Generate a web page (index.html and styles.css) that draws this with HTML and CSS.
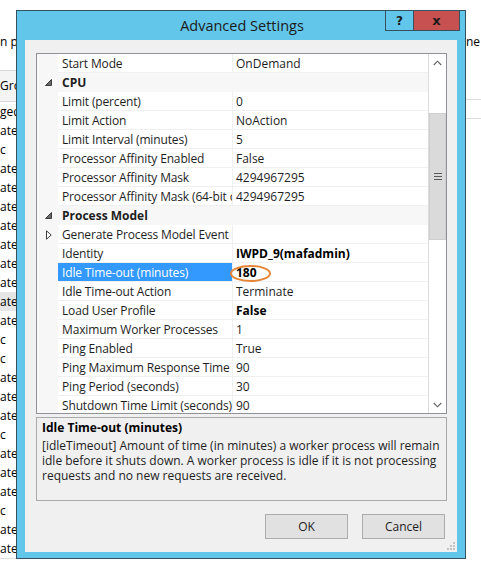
FILE: index.html
```html
<!DOCTYPE html>
<html>
<head>
<meta charset="utf-8">
<title>Advanced Settings</title>
<link rel="stylesheet" href="styles.css">
</head>
<body>
<div class="desktop">
  <div class="bg-left">
    <div class="bg-caption">n p</div>
    <div class="bg-header">Gro</div>
    <div class="bg-list">
      <div class="bg-row">ged</div>
      <div class="bg-row">ate</div>
      <div class="bg-row">c</div>
      <div class="bg-row">ate</div>
      <div class="bg-row">ate</div>
      <div class="bg-row">ate</div>
      <div class="bg-row">ate</div>
      <div class="bg-row">ate</div>
      <div class="bg-row">ate</div>
      <div class="bg-row">ate</div>
      <div class="bg-row hl">ate</div>
      <div class="bg-row">ate</div>
      <div class="bg-row">c</div>
      <div class="bg-row">c</div>
      <div class="bg-row">ate</div>
      <div class="bg-row">ate</div>
      <div class="bg-row">ate</div>
      <div class="bg-row">c</div>
      <div class="bg-row">ate</div>
      <div class="bg-row">ate</div>
      <div class="bg-row">ate</div>
      <div class="bg-row">c</div>
      <div class="bg-row">ate</div>
      <div class="bg-row">ate</div>
    </div>
  </div>
  <div class="bg-right">
    <div class="bg-caption">ne c</div>
    <div class="bg-rline first"></div>
    <div class="bg-rline"></div>
  </div>
</div>

<div class="dialog">
  <div class="titlebar">
    <div class="title">Advanced Settings</div>
    <div class="caption-buttons">
      <div class="cbtn help">?</div>
      <div class="cbtn close">x</div>
    </div>
  </div>
  <div class="client">
    <div class="grid">
      <div class="rows">
        <div class="row"><div class="gutter"></div><div class="name">Start Mode</div><div class="value">OnDemand</div></div>
        <div class="row cat"><div class="gutter"><svg class="exp" width="7" height="7" viewBox="0 0 7 7"><path d="M6.5 0.5 L6.5 6.5 L0.5 6.5 Z" fill="#6b6b6b" stroke="#3c3c3c" stroke-width="1" stroke-linejoin="round"/></svg></div><div class="cat-name">CPU</div></div>
        <div class="row"><div class="gutter"></div><div class="name">Limit (percent)</div><div class="value">0</div></div>
        <div class="row"><div class="gutter"></div><div class="name">Limit Action</div><div class="value">NoAction</div></div>
        <div class="row"><div class="gutter"></div><div class="name">Limit Interval (minutes)</div><div class="value">5</div></div>
        <div class="row"><div class="gutter"></div><div class="name">Processor Affinity Enabled</div><div class="value">False</div></div>
        <div class="row"><div class="gutter"></div><div class="name">Processor Affinity Mask</div><div class="value">4294967295</div></div>
        <div class="row"><div class="gutter"></div><div class="name">Processor Affinity Mask (64-bit option)</div><div class="value">4294967295</div></div>
        <div class="row cat"><div class="gutter"><svg class="exp" width="7" height="7" viewBox="0 0 7 7"><path d="M6.5 0.5 L6.5 6.5 L0.5 6.5 Z" fill="#6b6b6b" stroke="#3c3c3c" stroke-width="1" stroke-linejoin="round"/></svg></div><div class="cat-name">Process Model</div></div>
        <div class="row"><div class="gutter"><svg class="col" width="6" height="10" viewBox="0 0 6 10"><path d="M0.5 0.8 L5.2 5 L0.5 9.2 Z" fill="#fff" stroke="#404040" stroke-width="1" stroke-linejoin="round"/></svg></div><div class="name">Generate Process Model Event Log Entry</div><div class="value"></div></div>
        <div class="row"><div class="gutter"></div><div class="name">Identity</div><div class="value bold">IWPD_9(mafadmin)</div></div>
        <div class="row selected"><div class="gutter"></div><div class="name">Idle Time-out (minutes)</div><div class="value bold ringed">180<span class="ring"></span></div></div>
        <div class="row"><div class="gutter"></div><div class="name">Idle Time-out Action</div><div class="value">Terminate</div></div>
        <div class="row"><div class="gutter"></div><div class="name">Load User Profile</div><div class="value bold">False</div></div>
        <div class="row"><div class="gutter"></div><div class="name">Maximum Worker Processes</div><div class="value">1</div></div>
        <div class="row"><div class="gutter"></div><div class="name">Ping Enabled</div><div class="value">True</div></div>
        <div class="row"><div class="gutter"></div><div class="name">Ping Maximum Response Time (seconds)</div><div class="value">90</div></div>
        <div class="row"><div class="gutter"></div><div class="name">Ping Period (seconds)</div><div class="value">30</div></div>
        <div class="row"><div class="gutter"></div><div class="name">Shutdown Time Limit (seconds)</div><div class="value">90</div></div>
      </div>
      <div class="scrollbar">
        <div class="sb-btn"><svg width="9" height="6" viewBox="0 0 9 6"><path d="M0.8 5 L4.5 1.2 L8.2 5" fill="none" stroke="#606060" stroke-width="1.1"/></svg></div>
        <div class="sb-track">
          <div class="sb-thumb"><svg width="8" height="7" viewBox="0 0 8 7"><path d="M0 0.5 H8 M0 3.5 H8 M0 6.5 H8" stroke="#5a5a5a" stroke-width="1"/></svg></div>
        </div>
        <div class="sb-btn"><svg width="9" height="6" viewBox="0 0 9 6"><path d="M0.8 1 L4.5 4.8 L8.2 1" fill="none" stroke="#606060" stroke-width="1.1"/></svg></div>
      </div>
    </div>
    <div class="desc">
      <div class="desc-title">Idle Time-out (minutes)</div>
      <div class="desc-text">[idleTimeout] Amount of time (in minutes) a worker process will remain idle before it shuts down. A worker process is idle if it is not processing requests and no new requests are received.</div>
    </div>
    <div class="buttons">
      <div class="btn">OK</div>
      <div class="btn">Cancel</div>
    </div>
    <svg class="grip" width="9" height="9" viewBox="0 0 9 9">
      <rect x="7" y="1" width="2" height="2" fill="#c4c4c4"/>
      <rect x="4" y="4" width="2" height="2" fill="#c4c4c4"/>
      <rect x="7" y="4" width="2" height="2" fill="#c4c4c4"/>
      <rect x="1" y="7" width="2" height="2" fill="#c4c4c4"/>
      <rect x="4" y="7" width="2" height="2" fill="#c4c4c4"/>
      <rect x="7" y="7" width="2" height="2" fill="#c4c4c4"/>
    </svg>
  </div>
</div>
</body>
</html>
```
FILE: styles.css
```css
* { box-sizing: border-box; }
html, body { margin: 0; padding: 0; }
body {
  width: 481px;
  height: 561px;
  overflow: hidden;
  position: relative;
  background: #fff;
  font-family: "Open Sans", "Noto Sans", sans-serif;
  font-size: 12px;
  color: #000;
}

/* background window behind the dialog */
.desktop {
  display: flex;
  justify-content: space-between;
  height: 561px;
}
.bg-left { width: 40px; padding-top: 35px; }
.bg-right { width: 15px; padding-top: 35px; }
.bg-caption { height: 14px; line-height: 14px; white-space: nowrap; }
.bg-header {
  margin-top: 21px;
  height: 32px;
  line-height: 30px;
  background: #f4f4f4;
  border-top: 1px solid #d9d9d9;
  border-bottom: 1px solid #d9d9d9;
  white-space: nowrap;
}
.bg-list { border-bottom: 1px solid #e0e0e0; }
.bg-row { height: 19px; line-height: 19px; white-space: nowrap; }
.bg-row.hl { background: #e6e6e6; }
.bg-rline { height: 1px; background: #dcdcdc; margin-top: 18px; }
.bg-rline.first { margin-top: 50px; }

/* dialog window */
.dialog {
  position: absolute;
  left: 16px;
  top: 10px;
  width: 450px;
  height: 549px;
  border: 1px solid #35505f;
  background: #62c6ea;
  display: flex;
  flex-direction: column;
}
.titlebar {
  height: 29px;
  display: grid;
  grid-template-columns: 1fr auto 1fr;
  align-items: start;
}
.title {
  grid-column: 2;
  font-size: 14.5px;
  line-height: 29px;
  color: #1b1b1b;
  white-space: nowrap;
  padding-left: 2px;
}
.caption-buttons {
  grid-column: 3;
  justify-self: end;
  display: flex;
  margin-top: -1px;
  margin-right: 5px;
}
.cbtn {
  height: 21px;
  border: 1px solid #35505f;
  display: flex;
  align-items: center;
  justify-content: center;
  font-family: "DejaVu Sans", sans-serif;
  font-weight: bold;
  font-size: 12px;
  color: #1a1a1a;
}
.help { width: 29px; }
.close { width: 47px; margin-left: -1px; background: #c75050; font-size: 13px; }

.client {
  flex: 1;
  margin: 0 8px 6px;
  background: #f0f0f0;
  padding: 13px 10px 0 11px;
  display: flex;
  flex-direction: column;
  position: relative;
}

/* property grid */
.grid {
  height: 361px;
  border: 1px solid #8f9399;
  background: #fff;
  display: flex;
}
.rows { flex: 1; overflow: hidden; }
.row {
  display: grid;
  grid-template-columns: 21px 174px 1fr;
  height: 19px;
}
.gutter {
  background: #f7f7f7;
  display: flex;
  align-items: center;
  justify-content: center;
  padding-left: 2px;
}
.name, .value, .cat-name {
  line-height: 17px;
  padding-top: 1px;
  height: 19px;
  border-bottom: 1px solid #f0f0f0;
  white-space: nowrap;
  overflow: hidden;
  color: #1e1e1e;
}
.name { padding-left: 4px; letter-spacing: -0.15px; }
.value { border-left: 1px solid #f0f0f0; padding-left: 3px; }
.cat-name {
  grid-column: 2 / 4;
  background: #f7f7f7;
  font-weight: bold;
  padding-left: 4px;
  border-bottom-color: #f7f7f7;
}
.bold { font-weight: bold; color: #000; }
.selected .name { background: #3399ff; color: #fff; }
.ringed { position: relative; overflow: visible; }
.ring {
  position: absolute;
  left: -3px;
  top: 2px;
  width: 41px;
  height: 17px;
  border: 2px solid #e5853a;
  border-radius: 50%;
}

/* scrollbar */
.scrollbar {
  width: 18px;
  border-left: 1px solid #dcdcdc;
  background: #fff;
  display: flex;
  flex-direction: column;
}
.sb-btn {
  height: 17px;
  display: flex;
  align-items: center;
  justify-content: center;
}
.sb-track { flex: 1; }
.sb-thumb {
  margin-top: 42px;
  height: 127px;
  background: #dadada;
  border: 1px solid #cfcfcf;
  display: flex;
  align-items: center;
  justify-content: center;
}

/* description */
.desc {
  margin-top: 3px;
  height: 84px;
  border: 1px solid #a9a9a9;
  padding: 2px 5px 0;
  color: #1e1e1e;
}
.desc-title { font-weight: bold; line-height: 15px; margin-bottom: 3px; color: #000; }
.desc-text { line-height: 15px; }

/* buttons */
.buttons {
  margin-top: 13px;
  display: flex;
  justify-content: flex-end;
  gap: 14px;
  padding-right: 2px;
}
.btn {
  width: 83px;
  height: 25px;
  border: 1px solid #acacac;
  background: #e1e1e1;
  display: flex;
  align-items: center;
  justify-content: center;
  color: #1e1e1e;
}
.grip { position: absolute; right: 2px; bottom: 2px; }
```
